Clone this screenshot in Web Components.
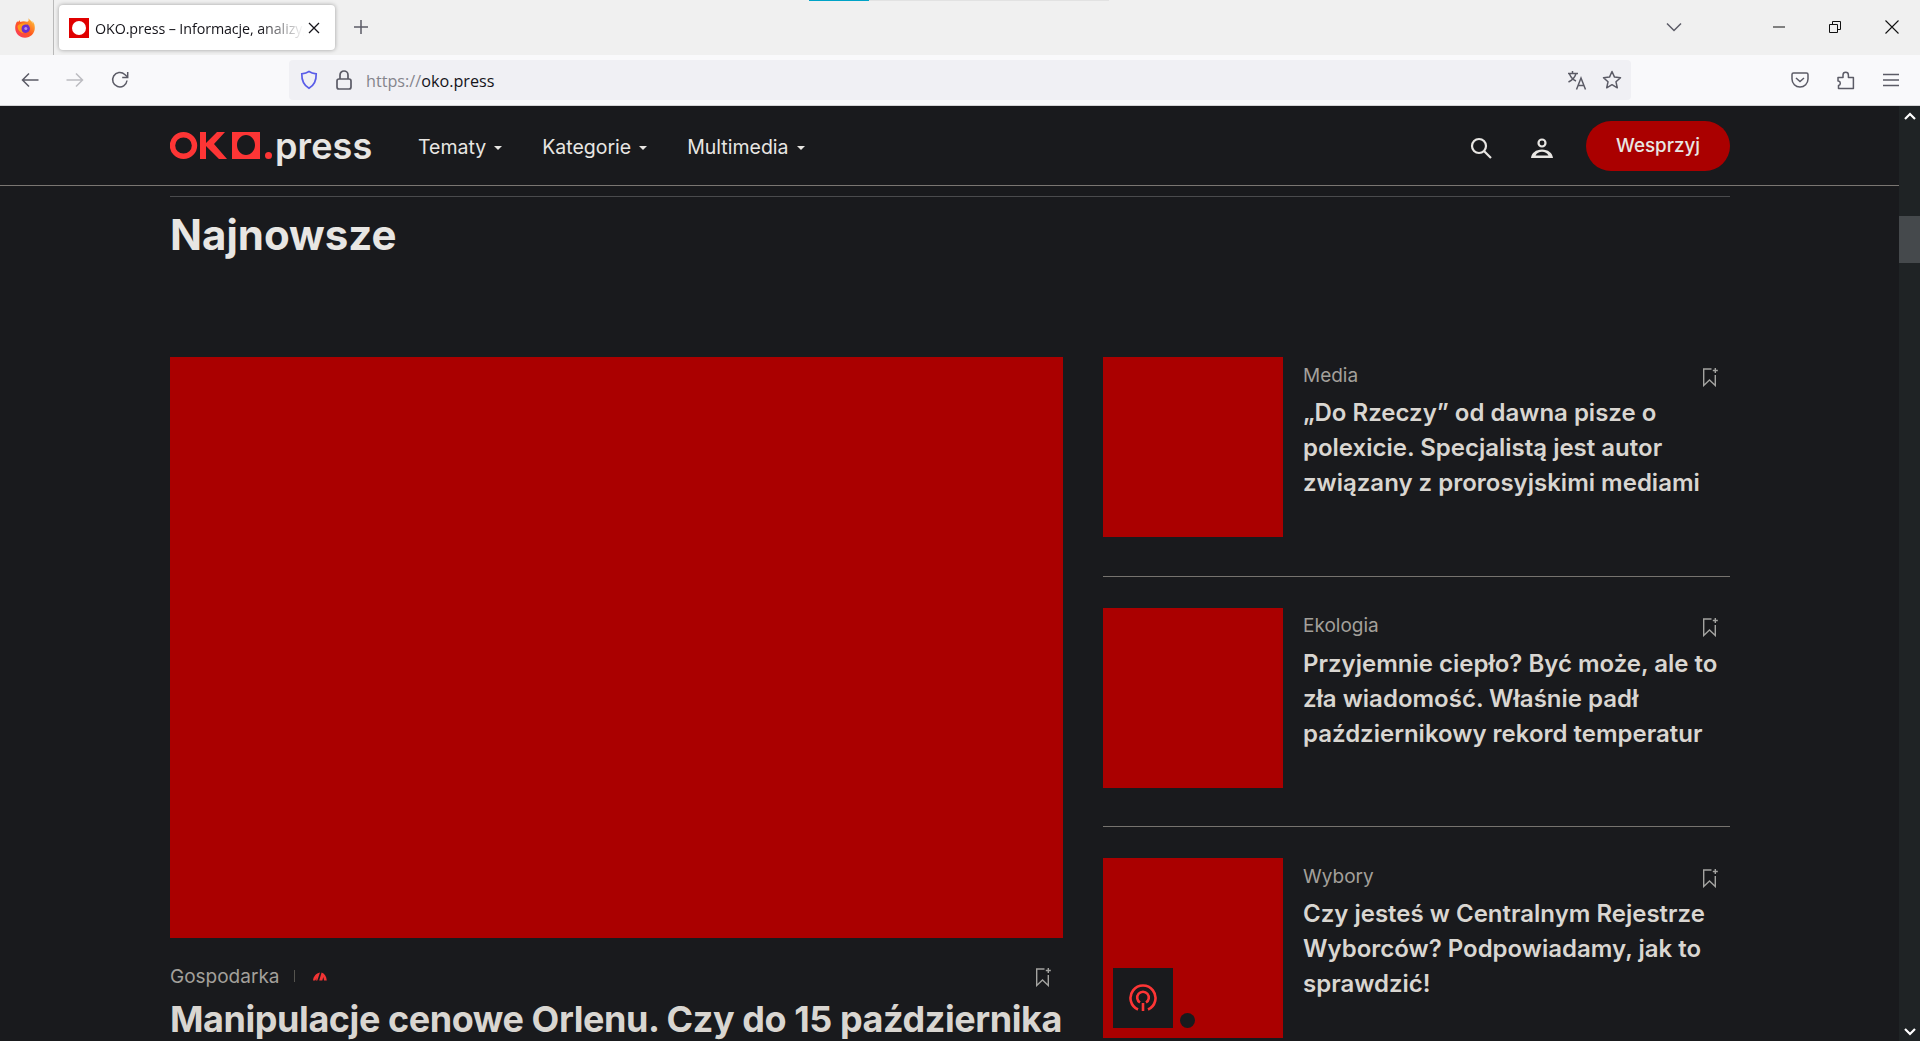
<!DOCTYPE html>
<html lang="pl">
<head>
<meta charset="utf-8">
<title>OKO.press</title>
<style>
  html, body {
    margin: 0;
    height: 100%;
    overflow: hidden;
    background: #191a1d;
  }
  body {
    display: flex;
    flex-direction: column;
    font-family: "Inter", "Liberation Sans", sans-serif;
  }
  .page {
    flex: 1;
    min-height: 0;
    display: flex;
  }
  .scroller {
    flex: 1;
    min-width: 0;
    overflow: hidden;
  }
</style>
</head>
<body>
<browser-tabs></browser-tabs>
<browser-toolbar></browser-toolbar>
<div class="page">
  <div class="scroller">
    <site-header></site-header>
    <latest-section>
      <lead-story slot="lead" category="Gospodarka" title="Manipulacje cenowe Orlenu. Czy do 15 października"></lead-story>
      <side-story slot="side" category="Media">„Do Rzeczy” od dawna pisze o polexicie. Specjalistą jest autor związany z prorosyjskimi mediami</side-story>
      <side-story slot="side" category="Ekologia">Przyjemnie ciepło? Być może, ale to zła wiadomość. Właśnie padł październikowy rekord temperatur</side-story>
      <side-story slot="side" category="Wybory" badge>Czy jesteś w Centralnym Rejestrze Wyborców? Podpowiadamy, jak to sprawdzić!</side-story>
    </latest-section>
  </div>
  <page-scrollbar></page-scrollbar>
</div>

<script>
const BOOKMARK = `<svg width="16" height="20" viewBox="0 0 16 20" fill="none" stroke="#a3a3a0" stroke-width="1.4">
  <path d="M9.5 2H1.7v16.5L7.5 13l5.8 5.5V8"/><path d="M13.3 1v5M10.8 3.5h5"/></svg>`;

function define(name, html, setup) {
  const tpl = document.createElement("template");
  tpl.innerHTML = html;
  customElements.define(name, class extends HTMLElement {
    constructor() {
      super();
      this.attachShadow({ mode: "open" }).append(tpl.content.cloneNode(true));
    }
    connectedCallback() {
      if (setup) setup(this.shadowRoot, this);
    }
  });
}

define("browser-tabs", `
  <style>
    :host {
      display: flex;
      position: relative;
      height: 55px;
      background: #f0f0f0;
      color: #15141a;
      font: 14px "Open Sans", "Noto Sans", sans-serif;
      align-items: flex-start;
    }
    .load { position: absolute; left: 809px; top: 0; width: 300px; height: 1px; background: #e2e2e2; }
    .load i { display: block; width: 60px; height: 1px; background: #00a3c7; }
    .fox { width: 54px; height: 55px; box-sizing: border-box; border-right: 1px solid #b9b9b9; display: flex; align-items: center; padding-left: 15px; }
    .tab {
      margin: 5px 0 0 5px;
      width: 276px;
      height: 45px;
      box-sizing: border-box;
      background: #fff;
      border-radius: 4px;
      box-shadow: 0 0 4px rgba(0,0,0,.35);
      display: flex;
      align-items: center;
      padding-left: 10px;
      gap: 6px;
    }
    .fav { width: 20px; height: 20px; background: #e00000; display: flex; align-items: center; justify-content: center; flex: none; }
    .fav i { width: 14px; height: 14px; border-radius: 50%; background: #fff; }
    .title { width: 209px; flex: none; padding-top: 1px; white-space: nowrap; font-size: 14.3px; letter-spacing: -.1px; -webkit-mask-image: linear-gradient(90deg, #000 165px, transparent 209px); mask-image: linear-gradient(90deg, #000 165px, transparent 209px); }
    .close { margin-left: -2px; flex: none; display: flex; }
    .plus { margin: 19px 0 0 18px; display: flex; }
    .spacer { flex: 1; }
    .chev { margin: 22px 69px 0 0; display: flex; }
    .win { display: flex; }
    .win span { width: 56.5px; height: 55px; display: flex; align-items: center; justify-content: center; padding-bottom: 1px; box-sizing: border-box; }
  </style>
  <div class="load"><i></i></div>
  <div class="fox">
    <svg width="20" height="20" viewBox="0 0 20 20">
      <defs>
        <linearGradient id="fx" x1="0" y1="1" x2="1" y2="0"><stop offset="0" stop-color="#f9336a"/><stop offset=".5" stop-color="#ff5a1f"/><stop offset="1" stop-color="#ffd23b"/></linearGradient>
      </defs>
      <path fill="url(#fx)" d="M19.4 6.5c-.3-1.3-1.4-3-2.2-3.5.6 1.2 1 2.4 1.1 3C17.2 3.400 15.300 2.400 13.300 .2c1 2.600-.2 3.300-1.300 3.500C10 3 7.200 2.800 5.400 4.100 5 3.600 4.700 2.900 4.800 2.300 4 2.800 3.600 3.400 3.200 4.100 2.800 4 2.400 3.800 2.300 3.300.8 5.300.2 7.400.2 10c0 5.400 4.400 9.800 9.800 9.800s9.800-4.400 9.800-9.800c0-1.200-.1-2.400-.4-3.500z"/>
      <circle cx="10.500" cy="10.500" r="4.400" fill="#6a2fd0"/>
      <circle cx="10.800" cy="10.500" r="1.500" fill="#b58df0"/>
      <path fill="#ff9a1a" d="M2.500 8c2-2.400 5.500-3.400 8.500-2.400 1 .4 1.700 1 1.700 1-2-.4-4.600 0-5.700 1.800C6 10.500 6.500 13.500 8.500 15.300 4.800 14.500 2.500 11.500 2.500 8z"/>
    </svg>
  </div>
  <div class="tab">
    <span class="fav"><i></i></span>
    <span class="title">OKO.press – Informacje, analizy,</span>
    <span class="close"><svg width="12" height="12" viewBox="0 0 12 12" stroke="#15141a" stroke-width="1.300"><path d="M1 1l10 10M11 1L1 11"/></svg></span>
  </div>
  <span class="plus"><svg width="16" height="16" viewBox="0 0 16 16" stroke="#5b5b66" stroke-width="1.500"><path d="M8 1v14M1 8h14"/></svg></span>
  <span class="spacer"></span>
  <span class="chev"><svg width="16" height="10" viewBox="0 0 16 10" fill="none" stroke="#5b5b66" stroke-width="1.500"><path d="M1 1.500l7 7 7-7"/></svg></span>
  <div class="win">
    <span><svg width="12" height="2" viewBox="0 0 12 2" stroke="#111"><path d="M0 1h12"/></svg></span>
    <span><svg width="12" height="12" viewBox="0 0 12 12" fill="none" stroke="#111"><path d="M.5 3.500h8v8h-8zM3.500 3.500v-3h8v8h-3"/></svg></span>
    <span><svg width="14" height="14" viewBox="0 0 14 14" stroke="#111" stroke-width="1.100"><path d="M.5.500l13 13M13.500.500l-13 13"/></svg></span>
  </div>
`);

define("browser-toolbar", `
  <style>
    :host {
      display: flex;
      align-items: center;
      height: 51px;
      box-sizing: border-box;
      background: #f9f9fb;
      border-bottom: 1px solid #d4d4d6;
      color: #15141a;
      font: 16.2px "Open Sans", "Noto Sans", sans-serif;
    }
    .nav { display: flex; width: 289px; padding-left: 21px; box-sizing: border-box; gap: 27px; align-items: center; flex: none; }
    .nav svg { display: block; }
    .url {
      width: 1342px;
      height: 40px;
      box-sizing: border-box;
      background: #f0f0f4;
      border-radius: 4px;
      display: flex;
      align-items: center;
      padding: 0 9px 0 11px;
      flex: none;
    }
    .shield { margin-right: 18px; display: flex; }
    .lock { margin-right: 14px; display: flex; }
    .addr { flex: 1; white-space: nowrap; padding-top: 2px; }
    .addr span { color: #85858c; }
    .end { display: flex; gap: 15px; align-items: center; }
    .tools { display: flex; margin-left: 160px; gap: 28px; align-items: center; }
    .tools svg, .end svg { display: block; }
  </style>
  <div class="nav">
    <svg width="18" height="16" viewBox="0 0 18 16" fill="none" stroke="#5b5b66" stroke-width="1.500"><path d="M17.500 8H1.500M8 1.500L1.500 8 8 14.500"/></svg>
    <svg width="18" height="16" viewBox="0 0 18 16" fill="none" stroke="#bcbcc1" stroke-width="1.500"><path d="M.5 8h16M10 1.500L16.500 8 10 14.500"/></svg>
    <svg width="18" height="18" viewBox="0 0 18 18" fill="none" stroke="#5b5b66" stroke-width="1.500"><path d="M16 9.500A7.200 7.200 0 1 1 13.800 3.500L16.500 6"/><path d="M16.700 1v5.500h-5.500" /></svg>
  </div>
  <div class="url">
    <span class="shield"><svg width="18" height="20" viewBox="0 0 18 20" fill="none" stroke="#5a5de8" stroke-width="1.700"><path d="M9 1.500c2 1.300 4.500 2 7.200 2.300.2 6.700-1.800 11.500-7.200 14.500C3.600 15.300 1.600 10.500 1.800 3.800 4.500 3.500 7 2.800 9 1.500z"/></svg></span>
    <span class="lock"><svg width="16" height="20" viewBox="0 0 16 20" fill="none" stroke="#5b5b66" stroke-width="1.700"><rect x="1" y="9" width="14" height="10" rx="2"/><path d="M4 9V5a4 4 0 0 1 8 0v4"/></svg></span>
    <div class="addr"><span>https://</span>oko.press</div>
    <div class="end">
      <svg width="20" height="20" viewBox="0 0 20 20" fill="none" stroke="#5b5b66" stroke-width="1.500"><path d="M1 3.500h10M5.500 1v2.500M9 3.500C8 7.500 4.500 10.500 1.500 12M2.500 4c1.200 3 4 6 6.500 7"/><path d="M9.500 19.500L14 8l4.500 11.500M11 15.500h6"/></svg>
      <svg width="20" height="20" viewBox="0 0 20 20" fill="none" stroke="#5b5b66" stroke-width="1.500" stroke-linejoin="round"><path d="M10 1.500l2.500 5.600 6 .6-4.500 4.100 1.300 6L10 14.700l-5.300 3.100 1.300-6-4.500-4.100 6-.6z"/></svg>
    </div>
  </div>
  <div class="tools">
    <svg width="18" height="16" viewBox="0 0 18 16" fill="none" stroke="#5b5b66" stroke-width="1.500"><path d="M2.500 1h13A1.500 1.500 0 0 1 17 2.500V7a8 8 0 0 1-16 0V2.500A1.500 1.500 0 0 1 2.500 1z"/><path d="M5 6l4 3.500L13 6"/></svg>
    <svg width="18" height="20" viewBox="0 0 18 20" fill="none" stroke="#5b5b66" stroke-width="1.500" stroke-linejoin="round"><path d="M1 11V7.500h5V5a2.700 2.700 0 0 1 5.400 0v2.500h5V18.500H1.500V15.500a2.300 2.300 0 0 0 0-4.500z"/></svg>
    <svg width="16" height="14" viewBox="0 0 16 14" fill="none" stroke="#5b5b66" stroke-width="1.500"><path d="M0 1.500h16M0 7h16M0 12.500h16"/></svg>
  </div>
`);

define("site-header", `
  <style>
    :host {
      display: flex;
      align-items: center;
      height: 80px;
      box-sizing: border-box;
      padding: 0 169px 0 170px;
      border-bottom: 1px solid #7a7672;
      color: #e8e6e3;
      font-size: 19.5px;
    }
    .logo { display: flex; align-items: center; font-size: 36px; line-height: 1; flex: none; width: 248px; }
    .logo svg { display: block; margin-right: 3px; flex: none; }
    .logo b { font-weight: 600; letter-spacing: .1px; }
    nav { display: flex; gap: 40px; flex: 1; }
    nav a { display: flex; align-items: center; gap: 8px; white-space: nowrap; font-weight: 400; margin-top: 2px; }
    nav i { width: 0; height: 0; border: 4px solid transparent; border-top-color: #e8e6e3; border-bottom: 0; margin-top: 2px; }
    .icons { display: flex; align-items: center; gap: 39px; margin: 4px 33px 0 0; }
    .icons svg { display: block; }
    .btn {
      width: 144px;
      height: 50px;
      margin-top: 1px;
      border-radius: 25px;
      background: #aa0000;
      color: #e8e6e3;
      display: flex;
      align-items: center;
      justify-content: center;
      padding-bottom: 2px;
      box-sizing: border-box;
      font-size: 18.8px;
      font-weight: 500;
    }
  </style>
  <div class="logo">
    <svg width="102" height="27" viewBox="0 0 102 27">
      <ellipse cx="13.500" cy="13.500" rx="11" ry="10.800" fill="none" stroke="#fd3535" stroke-width="5.400"/>
      <path fill="#fd3535" d="M30 0h6v11L47 0h8L44 12l13 15h-8L36 14v13h-6z"/>
      <path fill="#fd3535" fill-rule="evenodd" d="M62 0h28v27H62zM76 3c-5 0-9 4.500-9 10s4 10 9 10 9-4.500 9-10-4-10-9-10z"/>
      <circle cx="98.500" cy="23.500" r="3.500" fill="#fd3535"/>
    </svg>
    <b>press</b>
  </div>
  <nav>
    <a>Tematy <i></i></a>
    <a>Kategorie <i></i></a>
    <a>Multimedia <i></i></a>
  </nav>
  <div class="icons">
    <svg width="22" height="22" viewBox="0 0 22 22" fill="none" stroke="#e8e6e3" stroke-width="2.200"><circle cx="9" cy="9" r="7"/><path d="M14 14l7 7"/></svg>
    <svg width="22" height="20" viewBox="0 0 22 20"><circle cx="11" cy="5" r="3.500" fill="none" stroke="#e8e6e3" stroke-width="2.200"/><path fill="#e8e6e3" d="M0 20c.5-5 5-8.500 11-8.500S21.500 15 22 20zM4.500 17.500h13C16 15 14 13.800 11 13.800S6 15 4.500 17.500z" fill-rule="evenodd"/></svg>
  </div>
  <div class="btn">Wesprzyj</div>
`);

define("latest-section", `
  <style>
    :host { display: block; padding: 10px 169px 0 170px; }
    hr { margin: 0; border: 0; height: 1px; background: #4a4b4d; }
    h2 {
      margin: 14px 0 0;
      font-size: 42px;
      line-height: 48px;
      font-weight: 700;
      color: #e8e6e3;
      height: 146px;
    }
    .grid { display: grid; grid-template-columns: 893px 627px; gap: 40px; align-items: start; }
    .side { display: flex; flex-direction: column; }
    ::slotted(side-story:nth-child(n+3)) { border-top: 1px solid #76736f; padding-top: 31px; margin-top: 38.5px; }
  </style>
  <hr>
  <h2>Najnowsze</h2>
  <div class="grid">
    <slot name="lead"></slot>
    <div class="side"><slot name="side"></slot></div>
  </div>
`);

define("lead-story", `
  <style>
    :host { display: block; }
    .pic { height: 581px; background: #aa0000; }
    .meta { display: flex; align-items: center; margin-top: 26px; height: 24px; color: #a3a09b; font-size: 19px; }
    .sep { width: 1px; height: 12px; background: #55544f; margin: 0 18px 0 15px; }
    .spacer { flex: 1; }
    .meta svg { display: block; }
    .mark { margin-right: 12px; margin-top: 2px; }
    h3 { margin: 7px 0 0; font-size: 36px; line-height: 48px; font-weight: 700; letter-spacing: -.44px; color: #d9d6d1; white-space: nowrap; }
  </style>
  <div class="pic"></div>
  <div class="meta">
    <span class="cat"></span>
    <span class="sep"></span>
    <svg width="14" height="9" viewBox="0 0 14 9" fill="#f23434"><path d="M0 8.500C.5 4.500 3 1.500 7 .6L4.300 8.500H3L3.600 6 2.300 8.500zM8.600.6c2.800.9 4.800 3.800 5.200 7.900h-2.700L10.300 5 9.300 8.500H6.200z"/></svg>
    <span class="spacer"></span>
    <span class="mark"></span>
  </div>
  <h3></h3>
`, (root, host) => {
  root.querySelector(".cat").textContent = host.getAttribute("category");
  root.querySelector("h3").textContent = host.getAttribute("title");
  root.querySelector(".mark").innerHTML = BOOKMARK;
});

define("side-story", `
  <style>
    :host { display: grid; grid-template-columns: 180px 1fr; gap: 20px; }
    .pic { position: relative; height: 180px; background: #aa0000; }
    .badge { position: absolute; left: 10px; bottom: 10px; width: 60px; height: 60px; background: #191a1d; display: flex; align-items: center; justify-content: center; }
    .dot { position: absolute; left: 77px; bottom: 10px; width: 15px; height: 15px; border-radius: 50%; background: #191a1d; }
    .meta { display: flex; justify-content: space-between; align-items: center; height: 24px; margin-top: 6px; color: #a3a09b; font-size: 19px; }
    .meta svg { display: block; }
    .meta .mark { margin-right: 12px; margin-top: 3px; }
    h3 { margin: 8px 0 0; font-size: 24px; line-height: 35px; font-weight: 600; color: #d9d6d1; }
  </style>
  <div class="pic"></div>
  <div>
    <div class="meta"><span class="cat"></span><span class="mark"></span></div>
    <h3><slot></slot></h3>
  </div>
`, (root, host) => {
  root.querySelector(".cat").textContent = host.getAttribute("category");
  root.querySelector(".mark").innerHTML = BOOKMARK;
  if (host.hasAttribute("badge")) {
    root.querySelector(".pic").innerHTML = `<div class="badge"><svg width="28" height="28" viewBox="0 0 28 28" fill="none" stroke="#fd3535" stroke-width="2.600"><path d="M9 25.500A12.500 12.500 0 1 1 19 25.500"/><path d="M14 27v-8"/><path d="M11 18.500a5.800 5.800 0 1 1 6 0"/></svg></div><div class="dot"></div>`;
  }
});

define("page-scrollbar", `
  <style>
    :host { display: flex; flex-direction: column; flex: none; width: 21px; position: relative; background: #1f2325; }
    .arrow { height: 19px; display: flex; align-items: center; justify-content: center; flex: none; }
    .track { flex: 1; padding-top: 91px; }
    .thumb { height: 47px; background: #45494c; }
  </style>
  <div class="arrow"><svg width="12" height="8" viewBox="0 0 12 8" fill="none" stroke="#fff" stroke-width="2.200"><path d="M1 7l5-5 5 5"/></svg></div>
  <div class="track"><div class="thumb"></div></div>
  <div class="arrow"><svg width="12" height="8" viewBox="0 0 12 8" fill="none" stroke="#fff" stroke-width="2.200"><path d="M1 1l5 5 5-5"/></svg></div>
`);
</script>
</body>
</html>
